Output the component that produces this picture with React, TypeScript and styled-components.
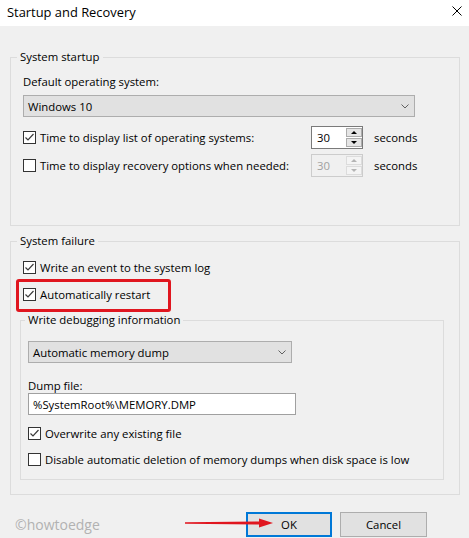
import React from "react";
import styled, { createGlobalStyle } from "styled-components";

const GlobalStyle = createGlobalStyle`
  html, body {
    margin: 0;
    padding: 0;
    background: #f0f0f0;
  }
  body {
    font-family: "Open Sans", "Noto Sans", "Liberation Sans", sans-serif;
    font-size: 11.35px;
    color: #000;
  }
  * {
    box-sizing: border-box;
  }
`;

const RED = "#e0161f";

const Window = styled.div`
  width: 469px;
  height: 538px;
  overflow: hidden;
  display: flex;
  flex-direction: column;
  background: #f0f0f0;
`;

const TitleBar = styled.div`
  height: 26px;
  flex-shrink: 0;
  display: flex;
  align-items: flex-start;
  justify-content: space-between;
  padding: 0 7px;
  background: #fff;
`;

const Title = styled.span`
  font-size: 12.9px;
  line-height: 24px;
`;

const CloseIcon = styled.svg`
  margin-top: 6px;
`;

const Body = styled.div`
  display: flex;
  flex-direction: column;
  padding: 0 9px 0 10px;
`;

const GroupBox = styled.fieldset<{ $mt: number; $pb: number; $ml?: number; $w?: number }>`
  margin: ${({ $mt }) => $mt}px 0 0 ${({ $ml }) => $ml ?? 0}px;
  padding: 0 0 ${({ $pb }) => $pb}px;
  border: 1px solid #dcdcdc;
  min-width: 0;
  width: ${({ $w }) => ($w ? `${$w}px` : "auto")};
`;

const Legend = styled.legend<{ $ml: number }>`
  margin-left: ${({ $ml }) => $ml}px;
  padding: 0 3px;
  line-height: 16px;
`;

const GroupContent = styled.div<{ $px: number }>`
  display: flex;
  flex-direction: column;
  align-items: flex-start;
  padding: 0 ${({ $px }) => $px}px;
`;

const FieldLabel = styled.div<{ $mt: number }>`
  margin-top: ${({ $mt }) => $mt}px;
  line-height: 15px;
  height: 15px;
`;

const Select = styled.div<{ $mt: number; $w: number }>`
  margin-top: ${({ $mt }) => $mt}px;
  width: ${({ $w }) => $w}px;
  height: 22px;
  display: flex;
  align-items: center;
  justify-content: space-between;
  padding: 0 5px 0 4px;
  background: #e1e1e1;
  border: 1px solid #adadad;
`;

const TextBox = styled.div<{ $w: number }>`
  width: ${({ $w }) => $w}px;
  height: 22px;
  display: flex;
  align-items: center;
  padding: 0 4px;
  background: #fff;
  border: 1px solid #a0a0a0;
`;

const SpinRow = styled.div<{ $mt: number }>`
  margin-top: ${({ $mt }) => $mt}px;
  height: 23px;
  display: flex;
  align-items: center;
`;

const SpinLabel = styled.div`
  width: 288px;
`;

const SpinBox = styled.div<{ $disabled?: boolean }>`
  width: 52px;
  height: 23px;
  display: flex;
  align-items: stretch;
  background: ${({ $disabled }) => ($disabled ? "#f0f0f0" : "#fff")};
  border: 1px solid ${({ $disabled }) => ($disabled ? "#cccccc" : "#7a7a7a")};
  color: ${({ $disabled }) => ($disabled ? "#a0a0a0" : "#000")};
`;

const SpinValue = styled.span`
  flex: 1;
  padding-left: 5px;
  line-height: 21px;
`;

const SpinButtons = styled.div`
  width: 16px;
  display: flex;
  flex-direction: column;
  gap: 1px;
  padding: 1px 0 1px 0;
`;

const SpinButton = styled.div<{ $disabled?: boolean }>`
  flex: 1;
  display: flex;
  align-items: center;
  justify-content: center;
  background: ${({ $disabled }) => ($disabled ? "#f4f4f4" : "#e5e5e5")};
  border: 1px solid ${({ $disabled }) => ($disabled ? "#dcdcdc" : "#acacac")};
`;

const Seconds = styled.span`
  margin-left: 11px;
`;

const CheckRow = styled.div<{ $mt?: number }>`
  margin-top: ${({ $mt }) => $mt ?? 0}px;
  height: 16px;
  display: flex;
  align-items: center;
  gap: 4px;
  white-space: nowrap;
`;

const Box = styled.span`
  width: 13px;
  height: 13px;
  flex-shrink: 0;
  display: flex;
  align-items: center;
  justify-content: center;
  background: #fff;
  border: 1px solid #333;
`;

const Highlight = styled.div`
  margin: 4px 0 -10px -7px;
  width: 155px;
  padding: 4px 4px 7px;
  border: 3px solid ${RED};
  border-radius: 3px;
`;

const Footer = styled.div`
  position: relative;
  margin-top: 17px;
  height: 25px;
  display: flex;
  align-items: center;
  gap: 8px;
  padding: 0 33px 0 5px;
`;

const Watermark = styled.span`
  margin-right: auto;
  font-size: 14px;
  color: #b2b2b2;
`;

const Button = styled.div<{ $default?: boolean }>`
  width: ${({ $default }) => ($default ? 86 : 87)}px;
  height: 25px;
  display: flex;
  align-items: center;
  justify-content: center;
  background: #e1e1e1;
  border: ${({ $default }) => ($default ? "2px solid #0078d7" : "1px solid #adadad")};
`;

const Arrow = styled.svg`
  position: absolute;
  left: 175px;
  top: 6px;
`;

const Check = ({ checked }: { checked?: boolean }) => (
  <Box>
    {checked && (
      <svg width="11" height="11" viewBox="0 0 11 11">
        <polyline points="1.5,5.5 4,8 9.5,2" fill="none" stroke="#3c3c3c" strokeWidth="1.2" />
      </svg>
    )}
  </Box>
);

const Chevron = () => (
  <svg width="8" height="5" viewBox="0 0 8 5">
    <polyline points="0.5,0.5 4,4 7.5,0.5" fill="none" stroke="#606060" strokeWidth="1" />
  </svg>
);

const Triangle = ({ up, color }: { up?: boolean; color: string }) => (
  <svg width="6" height="3" viewBox="0 0 6 3">
    <polygon points={up ? "0,3 3,0 6,3" : "0,0 6,0 3,3"} fill={color} />
  </svg>
);

const Spin = ({ disabled }: { disabled?: boolean }) => {
  const c = disabled ? "#b4b4b4" : "#000";
  return (
    <SpinBox $disabled={disabled}>
      <SpinValue>30</SpinValue>
      <SpinButtons>
        <SpinButton $disabled={disabled}>
          <Triangle up color={c} />
        </SpinButton>
        <SpinButton $disabled={disabled}>
          <Triangle color={c} />
        </SpinButton>
      </SpinButtons>
    </SpinBox>
  );
};

const App = () => {
  return (
    <>
      <GlobalStyle />
      <Window>
        <TitleBar>
          <Title>Startup and Recovery</Title>
          <CloseIcon width="10" height="10" viewBox="0 0 10 10">
            <path d="M0.5 0.5 L9.5 9.5 M9.5 0.5 L0.5 9.5" stroke="#000" strokeWidth="1" />
          </CloseIcon>
        </TitleBar>

        <Body>
          <GroupBox $mt={23} $pb={48}>
            <Legend $ml={6}>System startup</Legend>
            <GroupContent $px={12}>
              <FieldLabel $mt={9}>Default operating system:</FieldLabel>
              <Select $mt={6} $w={392}>
                <span>Windows 10</span>
                <Chevron />
              </Select>
              <SpinRow $mt={9}>
                <SpinLabel>
                  <CheckRow>
                    <Check checked />
                    Time to display list of operating systems:
                  </CheckRow>
                </SpinLabel>
                <Spin />
                <Seconds>seconds</Seconds>
              </SpinRow>
              <SpinRow $mt={5}>
                <SpinLabel>
                  <CheckRow>
                    <Check />
                    Time to display recovery options when needed:
                  </CheckRow>
                </SpinLabel>
                <Spin disabled />
                <Seconds>seconds</Seconds>
              </SpinRow>
            </GroupContent>
          </GroupBox>

          <GroupBox $mt={7} $pb={14}>
            <Legend $ml={6}>System failure</Legend>
            <GroupContent $px={12}>
              <CheckRow $mt={10}>
                <Check checked />
                Write an event to the system log
              </CheckRow>
              <Highlight>
                <CheckRow>
                  <Check checked />
                  Automatically restart
                </CheckRow>
              </Highlight>

              <GroupBox $mt={10} $pb={12} $ml={-3} $w={424}>
                <Legend $ml={4}>Write debugging information</Legend>
                <GroupContent $px={7}>
                  <Select $mt={13} $w={264}>
                    <span>Automatic memory dump</span>
                    <Chevron />
                  </Select>
                  <FieldLabel $mt={15}>Dump file:</FieldLabel>
                  <TextBox $w={268}>%SystemRoot%\MEMORY.DMP</TextBox>
                  <CheckRow $mt={10}>
                    <Check checked />
                    Overwrite any existing file
                  </CheckRow>
                  <CheckRow $mt={10}>
                    <Check />
                    Disable automatic deletion of memory dumps when disk space is low
                  </CheckRow>
                </GroupContent>
              </GroupBox>
            </GroupContent>
          </GroupBox>

          <Footer>
            <Watermark>©howtoedge</Watermark>
            <Button $default>OK</Button>
            <Button>Cancel</Button>
            <Arrow width="88" height="10" viewBox="0 0 88 10">
              <polygon points="0,4.2 76,3.4 76,6.6 0,5.8" fill={RED} />
              <polygon points="74,0.5 88,5 74,9.5" fill={RED} />
            </Arrow>
          </Footer>
        </Body>
      </Window>
    </>
  );
};

export default App;
